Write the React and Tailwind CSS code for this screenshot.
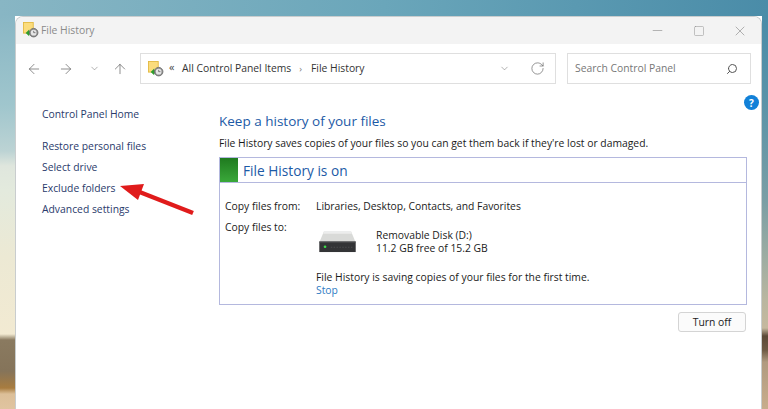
import React from "react";
import { ArrowLeft, ArrowRight, ArrowUp, ChevronDown, RotateCw, Minus, Square, X, Search } from "lucide-react";

const sideLinks = ["Restore personal files", "Select drive", "Exclude folders", "Advanced settings"];

const FileHistoryIcon = ({ className }) => (
  <svg viewBox="0 0 18 18" className={className}>
    <rect x="0.5" y="0.5" width="11" height="12" fill="#fbdc7c" stroke="#e2b93f" />
    <path d="M3 12.5 L7 8.5 L7 10.5 L12 10.5 L12 14 L7 14 L7 16 Z" fill="#2f9e2f" />
    <circle cx="12" cy="12" r="4.8" fill="#8e8e8e" stroke="#6d6d6d" />
    <circle cx="12" cy="12" r="3.2" fill="#e6e6e6" />
    <path d="M12 10 V12 H14" fill="none" stroke="#555" strokeWidth="0.8" />
  </svg>
);

const DiskIcon = () => (
  <svg viewBox="0 0 40 24" className="h-[23px] w-[39px]">
    <path d="M6 1 H34 L39 13 H1 Z" fill="#d9dad8" />
    <path d="M6 1 H34 L35 4 H5 Z" fill="#eceded" />
    <rect x="1" y="12" width="38" height="11" fill="#333436" />
    <rect x="1" y="12" width="38" height="1" fill="#5a5b5c" />
    <circle cx="7" cy="17.5" r="1.4" fill="#3ddc4a" />
    <path d="M13 18 H36" stroke="#4b4c4e" strokeWidth="1" strokeDasharray="1.5 1.5" />
  </svg>
);

export default function App() {
  return (
    <div className="relative flex h-[409px] w-[768px] flex-col overflow-hidden font-['Open_Sans',sans-serif] text-[10.35px] text-[#1a1a1a]">
      <div className="h-4 shrink-0 bg-[linear-gradient(to_right,#88b6c4,#6aa6ba_50%,#4a8ca8)]" />
      <div className="flex flex-1">
        <div className="w-[15px] shrink-0 bg-[linear-gradient(to_bottom,#88b6c4_0px,#a0c6cd_90px,#bcd3d4_135px,#dfe6dd_150px,#e3eadd_175px,#ece9d4_240px,#f2ead2_318px,#8a7a60_324px,#85745a_355px,#a87c3f_372px,#dcbf98_378px,#e0c4a0_393px)]" />
        <div className="flex w-[747px] shrink-0 flex-col overflow-hidden rounded-t-lg border border-b-0 border-[#c9cdce] bg-white">
          {/* title bar */}
          <div className="flex h-[27px] shrink-0 items-center bg-[#f3f3f3] pl-[7px]">
            <FileHistoryIcon className="mt-[-2px] h-[16px] w-[16px]" />
            <span className="ml-[2px] text-[#8a8a8a]">File History</span>
            <div className="ml-auto flex items-center pr-[13px] text-[#8c8c8c]">
              <Minus size={15} strokeWidth={1} />
              <Square size={12} strokeWidth={1} className="ml-[28px]" />
              <X size={16} strokeWidth={1} className="ml-[27px]" />
            </div>
          </div>

          {/* address bar */}
          <div className="flex h-[49px] shrink-0 items-center pl-[10px]">
            <ArrowLeft size={16} strokeWidth={1.1} className="text-[#666]" />
            <ArrowRight size={16} strokeWidth={1.1} className="ml-[16px] text-[#666]" />
            <ChevronDown size={11} strokeWidth={1.1} className="ml-[15px] text-[#666]" />
            <ArrowUp size={16} strokeWidth={1.1} className="ml-[12px] text-[#666]" />
            <div className="ml-[12px] flex h-[31px] w-[416px] items-center border border-[#dfdfdf] pl-[7px]">
              <FileHistoryIcon className="h-[16px] w-[16px]" />
              <span className="ml-[5px] mt-[-5px] w-[9px] text-[11px] leading-none text-[#444]">«</span>
              <span className="ml-[4px] text-[#333]">All Control Panel Items</span>
              <span className="ml-[8px] text-[9px] text-[#777]">›</span>
              <span className="ml-[9px] text-[#333]">File History</span>
              <ChevronDown size={11} strokeWidth={1.1} className="ml-auto text-[#666]" />
              <RotateCw size={15} strokeWidth={1.1} className="ml-[20px] mr-[10px] text-[#666]" />
            </div>
            <div className="ml-[11px] flex h-[31px] w-[184px] items-center justify-between border border-[#dfdfdf] pl-[7px] pr-[12px] text-[#777]">
              <span>Search Control Panel</span>
              <Search size={12} strokeWidth={2} className="-scale-x-100 text-[#555]" />
            </div>
          </div>

          {/* body */}
          <div className="flex flex-1 items-start">
            <div className="ml-[26px] w-[177px] shrink-0 pt-[11px] text-[#2a3a6b]">
              <div className="h-[21px] leading-[21px]">Control Panel Home</div>
              <div className="mt-[11px] flex flex-col">
                {sideLinks.map((l) => (
                  <div key={l} className="h-[21px] leading-[21px]">{l}</div>
                ))}
              </div>
            </div>
            <div className="w-[528px] shrink-0 pt-[18px]">
              <div className="text-[13.5px] leading-[20px] text-[#1c5aa6]">Keep a history of your files</div>
              <div className="mt-[3px] leading-[18px]">File History saves copies of your files so you can get them back if they're lost or damaged.</div>
              <div className="mt-[5px] border border-[#b4b8de]">
                <div className="flex h-[25px] items-stretch border-b border-[#b4b8de]">
                  <div className="w-[18px] bg-[linear-gradient(to_bottom,#1f7a1f,#3aa83a)]" />
                  <div className="ml-[5px] text-[13.7px] leading-[25px] text-[#1c5aa6]">File History is on</div>
                </div>
                <div className="flex pl-[5px] pt-[13px]">
                  <div className="w-[91px] shrink-0 leading-[21px]">
                    <div>Copy files from:</div>
                    <div>Copy files to:</div>
                  </div>
                  <div className="flex flex-col">
                    <div className="leading-[21px]">Libraries, Desktop, Contacts, and Favorites</div>
                    <div className="mt-[5px] flex h-[39px] items-center pl-[2px]">
                      <DiskIcon />
                      <div className="ml-[19px] leading-[13px]">
                        <div>Removable Disk (D:)</div>
                        <div>11.2 GB free of 15.2 GB</div>
                      </div>
                    </div>
                    <div className="mt-[9px] leading-[14px]">File History is saving copies of your files for the first time.</div>
                    <div className="mb-[7px] leading-[13px] text-[#2f7cc4]">Stop</div>
                  </div>
                </div>
              </div>
              <div className="mt-[7px] flex justify-end pr-[1px]">
                <button className="h-[20px] w-[68px] rounded-[3px] border border-[#d4d4d4] bg-[#fbfbfb] leading-none">Turn off</button>
              </div>
            </div>
            <div className="ml-[-3px] mt-[2px] flex h-[15px] w-[15px] shrink-0 items-center justify-center rounded-full bg-[#1281d8] text-[10px] font-bold leading-none text-white">?</div>
          </div>
        </div>
        <div className="flex-1 bg-[linear-gradient(to_bottom,#4a8ca8_0px,#5a93a8_84px,#7a9ea5_184px,#9fada2_244px,#b9b6a0_284px,#c5b89e_312px,#5c4a38_320px,#6e5a44_334px,#b09a80_346px,#c9ad8c_393px)]" />
      </div>

      {/* annotation arrow */}
      <svg viewBox="0 0 85 40" className="absolute left-[115px] top-[180px] h-[40px] w-[85px]">
        <path d="M5 6 L29 4 L23 20 Z" fill="#e01b1b" />
        <path d="M22 11 L78 33" stroke="#e01b1b" strokeWidth="4.5" />
      </svg>
    </div>
  );
}
